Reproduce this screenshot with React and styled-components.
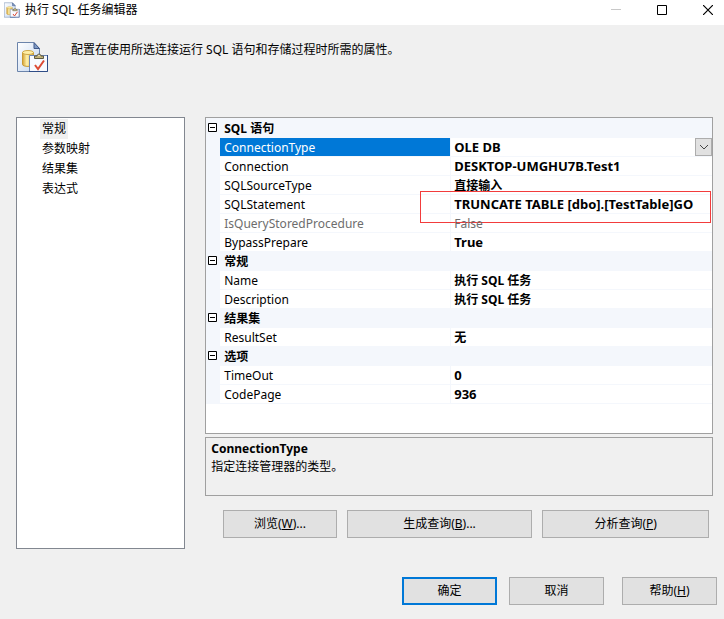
import React, { useState } from 'react';
import styled, { createGlobalStyle, css } from 'styled-components';

const PAGES = ['常规', '参数映射', '结果集', '表达式'];

const GROUPS = [
  {
    title: 'SQL 语句',
    rows: [
      { name: 'ConnectionType', value: 'OLE DB', options: ['OLE DB', 'ODBC', 'ADO', 'ADO.NET', 'EXCEL'] },
      { name: 'Connection', value: 'DESKTOP-UMGHU7B.Test1' },
      { name: 'SQLSourceType', value: '直接输入', chinese: true },
      { name: 'SQLStatement', value: 'TRUNCATE TABLE [dbo].[TestTable]GO', marked: true },
      { name: 'IsQueryStoredProcedure', value: 'False', disabled: true },
      { name: 'BypassPrepare', value: 'True' },
    ],
  },
  {
    title: '常规',
    rows: [
      { name: 'Name', value: '执行 SQL 任务', chinese: true },
      { name: 'Description', value: '执行 SQL 任务', chinese: true },
    ],
  },
  { title: '结果集', rows: [{ name: 'ResultSet', value: '无', chinese: true }] },
  {
    title: '选项',
    rows: [
      { name: 'TimeOut', value: '0' },
      { name: 'CodePage', value: '936' },
    ],
  },
];

// 任务图标: 文档 + 数据库 + 剪贴板
function TaskIcon({ size }) {
  return (
    <svg width={size} height={size} viewBox="0 0 32 32" aria-hidden="true">
      <defs>
        <linearGradient id="paper" x1="0" y1="0" x2="1" y2="1">
          <stop offset="0" stopColor="#ffffff" />
          <stop offset="1" stopColor="#c3d6f0" />
        </linearGradient>
        <linearGradient id="gold" x1="0" y1="0" x2="1" y2="0">
          <stop offset="0" stopColor="#d2a032" />
          <stop offset="0.4" stopColor="#fff2ae" />
          <stop offset="1" stopColor="#d9a93a" />
        </linearGradient>
      </defs>
      <path d="M.5 1.500H16.500L22.500 7.500V30.500H.5Z" fill="url(#paper)" stroke="#6b84ab" />
      <path d="M17 1.500V7.500H22.500Z" fill="#7f9ac4" stroke="#40598a" />
      <path d="M5.500 11.500V23.500C5.500 26 16.500 26 16.500 23.500V11.500Z" fill="url(#gold)" stroke="#c99a34" />
      <ellipse cx="11" cy="11.500" rx="5.500" ry="2" fill="#ffefa6" stroke="#cfa84a" />
      <path d="M12.500 14.500H30.500V30.500H12.500Z" fill="#f7faff" stroke="#6c86b6" />
      <path d="M30.500 14V30.500H12" fill="none" stroke="#2f4d86" />
      <path d="M17.500 17.500V15H20C20 12.500 24 12.500 24 15H26.500V17.500Z" fill="#c4b478" stroke="#5f5a42" />
      <path d="M21.500 14.500H22.500" stroke="#fff" />
      <path d="M18 24L21 28L27 19.500" fill="none" stroke="#dc4a34" strokeWidth="2" />
    </svg>
  );
}

function PropertyRow({ row, selected, onSelect }) {
  return (
    <Row onClick={onSelect}>
      <Gutter />
      <NameCell scope="row" $selected={selected} $disabled={row.disabled}>
        {row.name}
      </NameCell>
      <ValueCell $disabled={row.disabled} $chinese={row.chinese}>
        {row.options ? (
          <SelectBox>
            <ValueSelect aria-label={row.name} defaultValue={row.value}>
              {row.options.map((option) => (
                <option key={option}>{option}</option>
              ))}
            </ValueSelect>
            <SelectArrow>
              <svg width="10" height="6" viewBox="0 0 10 6">
                <path d="M1 1L5 5L9 1" fill="none" stroke="#444" />
              </svg>
            </SelectArrow>
          </SelectBox>
        ) : (
          row.value
        )}
        {row.marked && <Mark />}
      </ValueCell>
    </Row>
  );
}

function App() {
  const [page, setPage] = useState('常规');
  const [selected, setSelected] = useState('ConnectionType');
  const [closed, setClosed] = useState({});

  // 展开 / 折叠分组
  const toggle = (title) => setClosed({ ...closed, [title]: !closed[title] });

  return (
    <Window>
      <GlobalStyle />
      <TitleBar>
        <TaskIcon size={16} />
        <Title>执行 SQL 任务编辑器</Title>
        <WindowButton aria-label="最小化" disabled>
          <svg width="10" height="10"><path d="M0 4.500H10" stroke="#c8c8c8" /></svg>
        </WindowButton>
        <WindowButton aria-label="最大化">
          <svg width="10" height="10"><path d="M.5 .5H9.500V9.500H.5Z" fill="none" stroke="#000" /></svg>
        </WindowButton>
        <WindowButton aria-label="关闭">
          <svg width="10" height="10"><path d="M0 0L10 10M10 0L0 10" stroke="#000" strokeWidth="1.200" /></svg>
        </WindowButton>
      </TitleBar>

      <Intro>
        <TaskIcon size={32} />
        <p>配置在使用所选连接运行 SQL 语句和存储过程时所需的属性。</p>
      </Intro>

      <Main>
        <PageList>
          {PAGES.map((name) => (
            <PageButton key={name} $active={name === page} onClick={() => setPage(name)}>
              {name}
            </PageButton>
          ))}
        </PageList>

        <Content>
          <GridPanel>
            <PropertyTable>
              <colgroup>
                <GutterCol />
                <NameCol />
                <col />
              </colgroup>
              {GROUPS.map((group) => (
                <tbody key={group.title}>
                  <Row>
                    <Gutter>
                      <Expander aria-label={group.title} onClick={() => toggle(group.title)}>
                        <svg width="9" height="9">
                          <path d="M.5 .5H8.500V8.500H.5Z" fill="#fff" stroke="#000" />
                          <path d={closed[group.title] ? 'M2 4.500H7M4.500 2V7' : 'M2 4.500H7'} stroke="#000" />
                        </svg>
                      </Expander>
                    </Gutter>
                    <GroupCell colSpan={2}>{group.title}</GroupCell>
                  </Row>
                  {!closed[group.title] &&
                    group.rows.map((row) => (
                      <PropertyRow
                        key={row.name}
                        row={row}
                        selected={row.name === selected}
                        onSelect={() => setSelected(row.name)}
                      />
                    ))}
                </tbody>
              ))}
            </PropertyTable>
          </GridPanel>

          <HelpPanel>
            <h2>ConnectionType</h2>
            <p>指定连接管理器的类型。</p>
          </HelpPanel>

          <QueryButtons>
            <Button $grow={113}>浏览(<u>W</u>)...</Button>
            <Button $grow={186}>生成查询(<u>B</u>)...</Button>
            <Button $grow={167}>分析查询(<u>P</u>)</Button>
          </QueryButtons>
        </Content>
      </Main>

      <Footer>
        <Button $primary>确定</Button>
        <Button>取消</Button>
        <HelpButton>帮助(<u>H</u>)</HelpButton>
      </Footer>
    </Window>
  );
}

export default App;

// 样式定义
const GlobalStyle = createGlobalStyle`
  * {
    box-sizing: border-box;
  }
  body {
    margin: 0;
    background: #f0f0f0;
  }
  body, button, select {
    font-family: "Noto Sans", "Noto Sans CJK SC", sans-serif;
    font-size: 12px;
    line-height: 18px;
    color: #000;
  }
  h1, h2, p {
    margin: 0;
    font-size: 12px;
  }
  svg {
    display: block;
    flex: none;
  }
`;

const Window = styled.div`
  display: flex;
  flex-direction: column;
  min-height: 100vh;
`;

const TitleBar = styled.header`
  display: flex;
  align-items: center;
  gap: 36px;
  height: 25px;
  padding: 0 11px 6px 4px;
  background: #fff;
`;

const Title = styled.h1`
  flex: 1;
  margin-left: -31px;
  font-weight: 400;
`;

const WindowButton = styled.button`
  padding: 0;
  border: none;
  background: none;
`;

const Intro = styled.div`
  display: flex;
  gap: 22px;
  padding: 16px 17px 0;
  height: 92px;
`;

const Main = styled.main`
  flex: 1;
  display: grid;
  grid-template-columns: minmax(0, 1fr) minmax(0, 3fr);
  gap: 20px;
  padding: 0 11px 0 16px;
`;

const PageList = styled.nav`
  display: flex;
  flex-direction: column;
  align-items: flex-start;
  padding: 1px 0 0 23px;
  border: 1px solid #828790;
  background: #fff;
`;

const PageButton = styled.button`
  height: 20px;
  padding: 0 2px;
  border: none;
  background: ${({ $active }) => ($active ? '#f0f0f0' : 'none')};
`;

const Content = styled.div`
  display: flex;
  flex-direction: column;
`;

const GridPanel = styled.section`
  min-height: 317px;
  padding-top: 1px;
  border: 1px solid #a0a0a0;
  background: linear-gradient(#f4f7fc 1px, #fff 1px);
`;

const PropertyTable = styled.table`
  width: 100%;
  table-layout: fixed;
  border-collapse: separate;
  border-spacing: 0;
`;

const GutterCol = styled.col`
  width: 14px;
`;

const NameCol = styled.col`
  width: 231px;
`;

const Row = styled.tr`
  height: 19px;
`;

const Gutter = styled.td`
  padding: 0 0 2px 2px;
  background: #f4f7fc;
`;

const Expander = styled.button`
  display: block;
  padding: 0;
  border: none;
  background: none;
`;

const cell = css`
  height: 19px;
  padding: 1px 0 0 4px;
  border-bottom: 1px solid #f4f7fc;
  line-height: 17px;
  text-align: left;
  white-space: nowrap;
`;

const GroupCell = styled.th`
  ${cell}
  background: #f4f7fc;
`;

const NameCell = styled.th`
  ${cell}
  border-right: 1px solid #f4f7fc;
  background: ${({ $selected }) => ($selected ? '#0078d7' : '#fff')};
  background-clip: padding-box;
  color: ${({ $selected, $disabled }) => ($selected ? '#fff' : $disabled ? '#6d6d6d' : '#000')};
  font-weight: 400;
`;

const ValueCell = styled.td`
  ${cell}
  position: relative;
  padding-left: 3px;
  color: ${({ $disabled }) => ($disabled ? '#6d6d6d' : '#000')};
  font-size: ${({ $chinese, $disabled }) => ($chinese || $disabled ? '12px' : '13px')};
  font-weight: ${({ $disabled }) => ($disabled ? 400 : 700)};
`;

const SelectBox = styled.div`
  position: relative;
  height: 18px;
  margin-top: -1px;
`;

const ValueSelect = styled.select`
  display: block;
  width: 100%;
  height: 18px;
  padding: 0;
  border: none;
  appearance: none;
  background: none;
  font-size: 13px;
  font-weight: 700;
`;

const SelectArrow = styled.span`
  position: absolute;
  top: 0;
  right: 0;
  display: flex;
  align-items: center;
  justify-content: center;
  width: 17px;
  height: 18px;
  border: 1px solid #adadad;
  background: #e1e1e1;
  pointer-events: none;
`;

const Mark = styled.span`
  position: absolute;
  inset: -4px 1px -10px -31px;
  border: 1px solid #f23c3c;
  pointer-events: none;
`;

const HelpPanel = styled.section`
  height: 59px;
  margin-top: 3px;
  padding: 2px 5px;
  border: 1px solid #a0a0a0;
`;

const QueryButtons = styled.div`
  display: flex;
  gap: 10px;
  padding: 14px 4px 11px 18px;
`;

const Button = styled.button`
  flex: ${({ $grow }) => ($grow ? `${$grow} 1 0` : '0 0 95px')};
  height: 28px;
  padding: 0;
  border: ${({ $primary }) => ($primary ? '2px solid #0078d7' : '1px solid #adadad')};
  background: #e1e1e1;
`;

const HelpButton = styled(Button)`
  margin-left: 6px;
`;

const Footer = styled.footer`
  display: flex;
  justify-content: flex-end;
  gap: 12px;
  padding: 28px 7px 14px;
`;
